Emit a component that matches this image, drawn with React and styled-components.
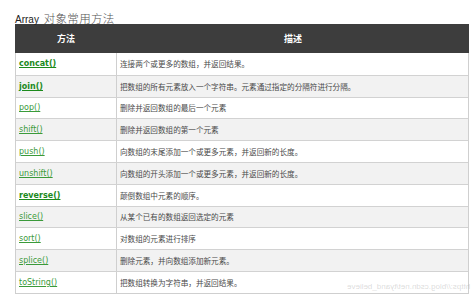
import React from 'react';
import styled, { createGlobalStyle } from 'styled-components';

const GlobalStyle = createGlobalStyle`
  html, body {
    margin: 0;
    padding: 0;
    background: #ffffff;
  }
`;

const Page = styled.div`
  position: relative;
  box-sizing: border-box;
  width: 474px;
  height: 296px;
  padding: 0 5px 0 15px;
  overflow: hidden;
`;

const Title = styled.h2`
  margin: 0;
  height: 24px;
  box-sizing: border-box;
  padding-top: 7px;
  line-height: 16px;
  font-weight: normal;
  color: #333;
  white-space: nowrap;
  .en {
    font-family: "Liberation Sans", Arial, sans-serif;
    font-size: 10px;
    color: #222;
  }
  .zh {
    font-family: "Noto Sans CJK SC", sans-serif;
    font-size: 11.5px;
    font-weight: 300;
    color: #555;
    margin-left: 2px;
    letter-spacing: 0.3px;
  }
`;

const Table = styled.div`
  width: 454px;
  border: 1px solid #cfcfcf;
  border-top: none;
  box-sizing: border-box;
`;

const HeadRow = styled.div`
  display: grid;
  grid-template-columns: 102px 1fr;
  height: 29px;
  background: #3d3d3d;
  margin: 0 -1px;
`;

const HeadCell = styled.div`
  display: flex;
  align-items: center;
  justify-content: center;
  color: #ffffff;
  font-family: "Noto Sans CJK SC", sans-serif;
  font-size: 9px;
  font-weight: 700;
`;

const Row = styled.div`
  display: grid;
  grid-template-columns: 101px 1fr;
  height: 21.8px;
  box-sizing: border-box;
  border-top: ${p => (p.$first ? 'none' : '1px solid #d2d2d2')};
  background: ${p => (p.$alt ? '#f2f2f2' : '#ffffff')};
`;

const MethodCell = styled.div`
  display: flex;
  align-items: center;
  padding-left: 3px;
  border-right: 1px solid #cfcfcf;
`;

const MethodLink = styled.a`
  font-family: "DejaVu Sans", Verdana, sans-serif;
  font-size: 8px;
  font-weight: ${p => (p.$bold ? 700 : 400)};
  color: ${p => (p.$bold ? '#1b8a1b' : '#3a9a3a')};
  text-decoration: underline;
`;

const DescCell = styled.div`
  display: flex;
  align-items: center;
  padding-left: 3px;
  font-family: "Noto Sans CJK SC", sans-serif;
  font-size: 7.6px;
  color: #4a4a4a;
  white-space: nowrap;
`;

const Watermark = styled.div`
  position: absolute;
  right: 4px;
  bottom: 5px;
  font-family: "Liberation Sans", Arial, sans-serif;
  font-size: 8px;
  color: rgba(150, 150, 150, 0.35);
  transform: scaleX(-1);
`;

const methods = [
  ['concat()', '连接两个或更多的数组，并返回结果。', true],
  ['join()', '把数组的所有元素放入一个字符串。元素通过指定的分隔符进行分隔。', true],
  ['pop()', '删除并返回数组的最后一个元素', false],
  ['shift()', '删除并返回数组的第一个元素', false],
  ['push()', '向数组的末尾添加一个或更多元素，并返回新的长度。', false],
  ['unshift()', '向数组的开头添加一个或更多元素，并返回新的长度。', false],
  ['reverse()', '颠倒数组中元素的顺序。', true],
  ['slice()', '从某个已有的数组返回选定的元素', false],
  ['sort()', '对数组的元素进行排序', false],
  ['splice()', '删除元素，并向数组添加新元素。', false],
  ['toString()', '把数组转换为字符串，并返回结果。', false],
];

export default function App() {
  return (
    <Page>
      <GlobalStyle />
      <Title>
        <span className="en">Array</span>
        <span className="zh"> 对象常用方法</span>
      </Title>
      <Table>
        <HeadRow>
          <HeadCell>方法</HeadCell>
          <HeadCell>描述</HeadCell>
        </HeadRow>
        {methods.map(([name, desc, bold], i) => (
          <Row key={name} $first={i === 0} $alt={i % 2 === 1}>
            <MethodCell>
              <MethodLink href="#" $bold={bold}>{name}</MethodLink>
            </MethodCell>
            <DescCell>{desc}</DescCell>
          </Row>
        ))}
      </Table>
      <Watermark>https://blog.csdn.net/tyand_believe</Watermark>
    </Page>
  );
}
